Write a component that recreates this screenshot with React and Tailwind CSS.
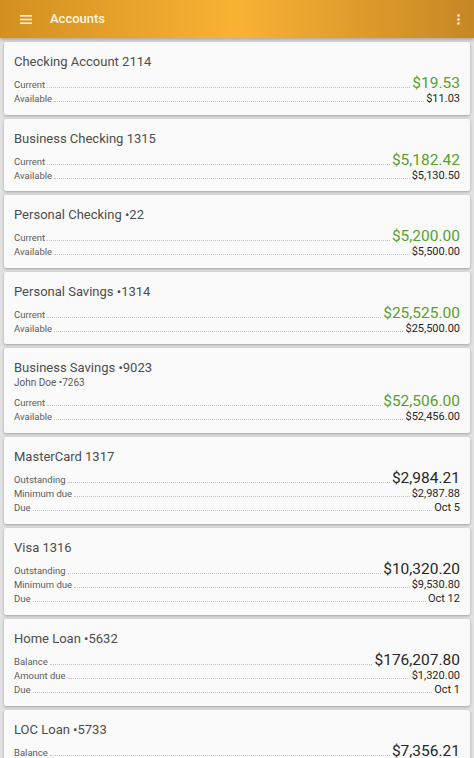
const ACCOUNTS = [
  { name: "Checking Account 2114", rows: [["Current", "$19.53"], ["Available", "$11.03"]], green: true },
  { name: "Business Checking 1315", rows: [["Current", "$5,182.42"], ["Available", "$5,130.50"]], green: true },
  { name: "Personal Checking \u202222", rows: [["Current", "$5,200.00"], ["Available", "$5,500.00"]], green: true },
  { name: "Personal Savings \u20221314", rows: [["Current", "$25,525.00"], ["Available", "$25,500.00"]], green: true },
  { name: "Business Savings \u20229023", sub: "John Doe \u20227263", rows: [["Current", "$52,506.00"], ["Available", "$52,456.00"]], green: true },
  { name: "MasterCard 1317", rows: [["Outstanding", "$2,984.21"], ["Minimum due", "$2,987.88"], ["Due", "Oct 5"]] },
  { name: "Visa 1316", rows: [["Outstanding", "$10,320.20"], ["Minimum due", "$9,530.80"], ["Due", "Oct 12"]] },
  { name: "Home Loan \u20225632", rows: [["Balance", "$176,207.80"], ["Amount due", "$1,320.00"], ["Due", "Oct 1"]] },
  { name: "LOC Loan \u20225733", rows: [["Balance", "$7,356.21"], ["Amount due", "$250.00"], ["Due", "Oct 9"]] },
];

function Row({ label, value, big, green }) {
  return (
    <div className={`flex items-baseline ${big ? "h-[16px]" : "h-[14.5px]"}`}>
      <span className="text-[9.5px] leading-[14px] text-[#5c5c5c]">{label}</span>
      <span className="flex-1 mx-[2px] border-b border-dotted border-[#c4c4c4]" />
      {big ? (
        <span className={`text-[15.5px] leading-[14px] ${green ? "text-[#58a02d]" : "text-[#262626]"}`}>{value}</span>
      ) : (
        <span className="text-[11px] leading-[14px] text-[#262626]">{value}</span>
      )}
    </div>
  );
}

function AccountCard({ acct }) {
  return (
    <div className="bg-[#fafafa] rounded-[2px] shadow-[0_1px_3px_rgba(0,0,0,0.3)] pt-[12px] pb-[8px] px-[10px]">
      <div className="text-[13px] leading-[16px] text-[#4d4d4d]">{acct.name}</div>
      {acct.sub && <div className="text-[10px] leading-[13px] text-[#5a5a5a]">{acct.sub}</div>}
      <div className={acct.sub ? "mt-[5px]" : "mt-[6px]"}>
        {acct.rows.map(([l, v], i) => (
          <Row key={l} label={l} value={v} big={i === 0} green={acct.green} />
        ))}
      </div>
    </div>
  );
}

export default function App() {
  return (
    <div className="w-[474px] h-[758px] overflow-hidden bg-[#e2e2e2] flex flex-col" style={{ fontFamily: "Roboto, 'Liberation Sans', sans-serif" }}>
      {/* Toolbar */}
      <div className="h-[38px] shrink-0 flex items-center bg-gradient-to-r from-[#d2901f] via-[#f9b234] to-[#c68725] shadow-[0_2px_3px_rgba(0,0,0,0.25)] z-10">
        <svg className="ml-[20px] w-[12px] h-[9px]" viewBox="0 0 12 9" fill="#fff3d6">
          <rect x="0" y="0" width="12" height="1.6" />
          <rect x="0" y="3.7" width="12" height="1.6" />
          <rect x="0" y="7.4" width="12" height="1.6" />
        </svg>
        <span className="ml-[18px] text-[13px] font-medium text-[#fff6e0]">Accounts</span>
        <div className="flex-1" />
        <svg className="mr-[14px] w-[3px] h-[11px]" viewBox="0 0 3 11" fill="#fff3d6">
          <circle cx="1.5" cy="1.5" r="1.3" />
          <circle cx="1.5" cy="5.5" r="1.3" />
          <circle cx="1.5" cy="9.5" r="1.3" />
        </svg>
      </div>

      {/* List */}
      <div className="flex-1 overflow-hidden px-[4px] pt-[4px] flex flex-col gap-[4px]">
        {ACCOUNTS.map(a => (
          <AccountCard key={a.name} acct={a} />
        ))}
      </div>
    </div>
  );
}
